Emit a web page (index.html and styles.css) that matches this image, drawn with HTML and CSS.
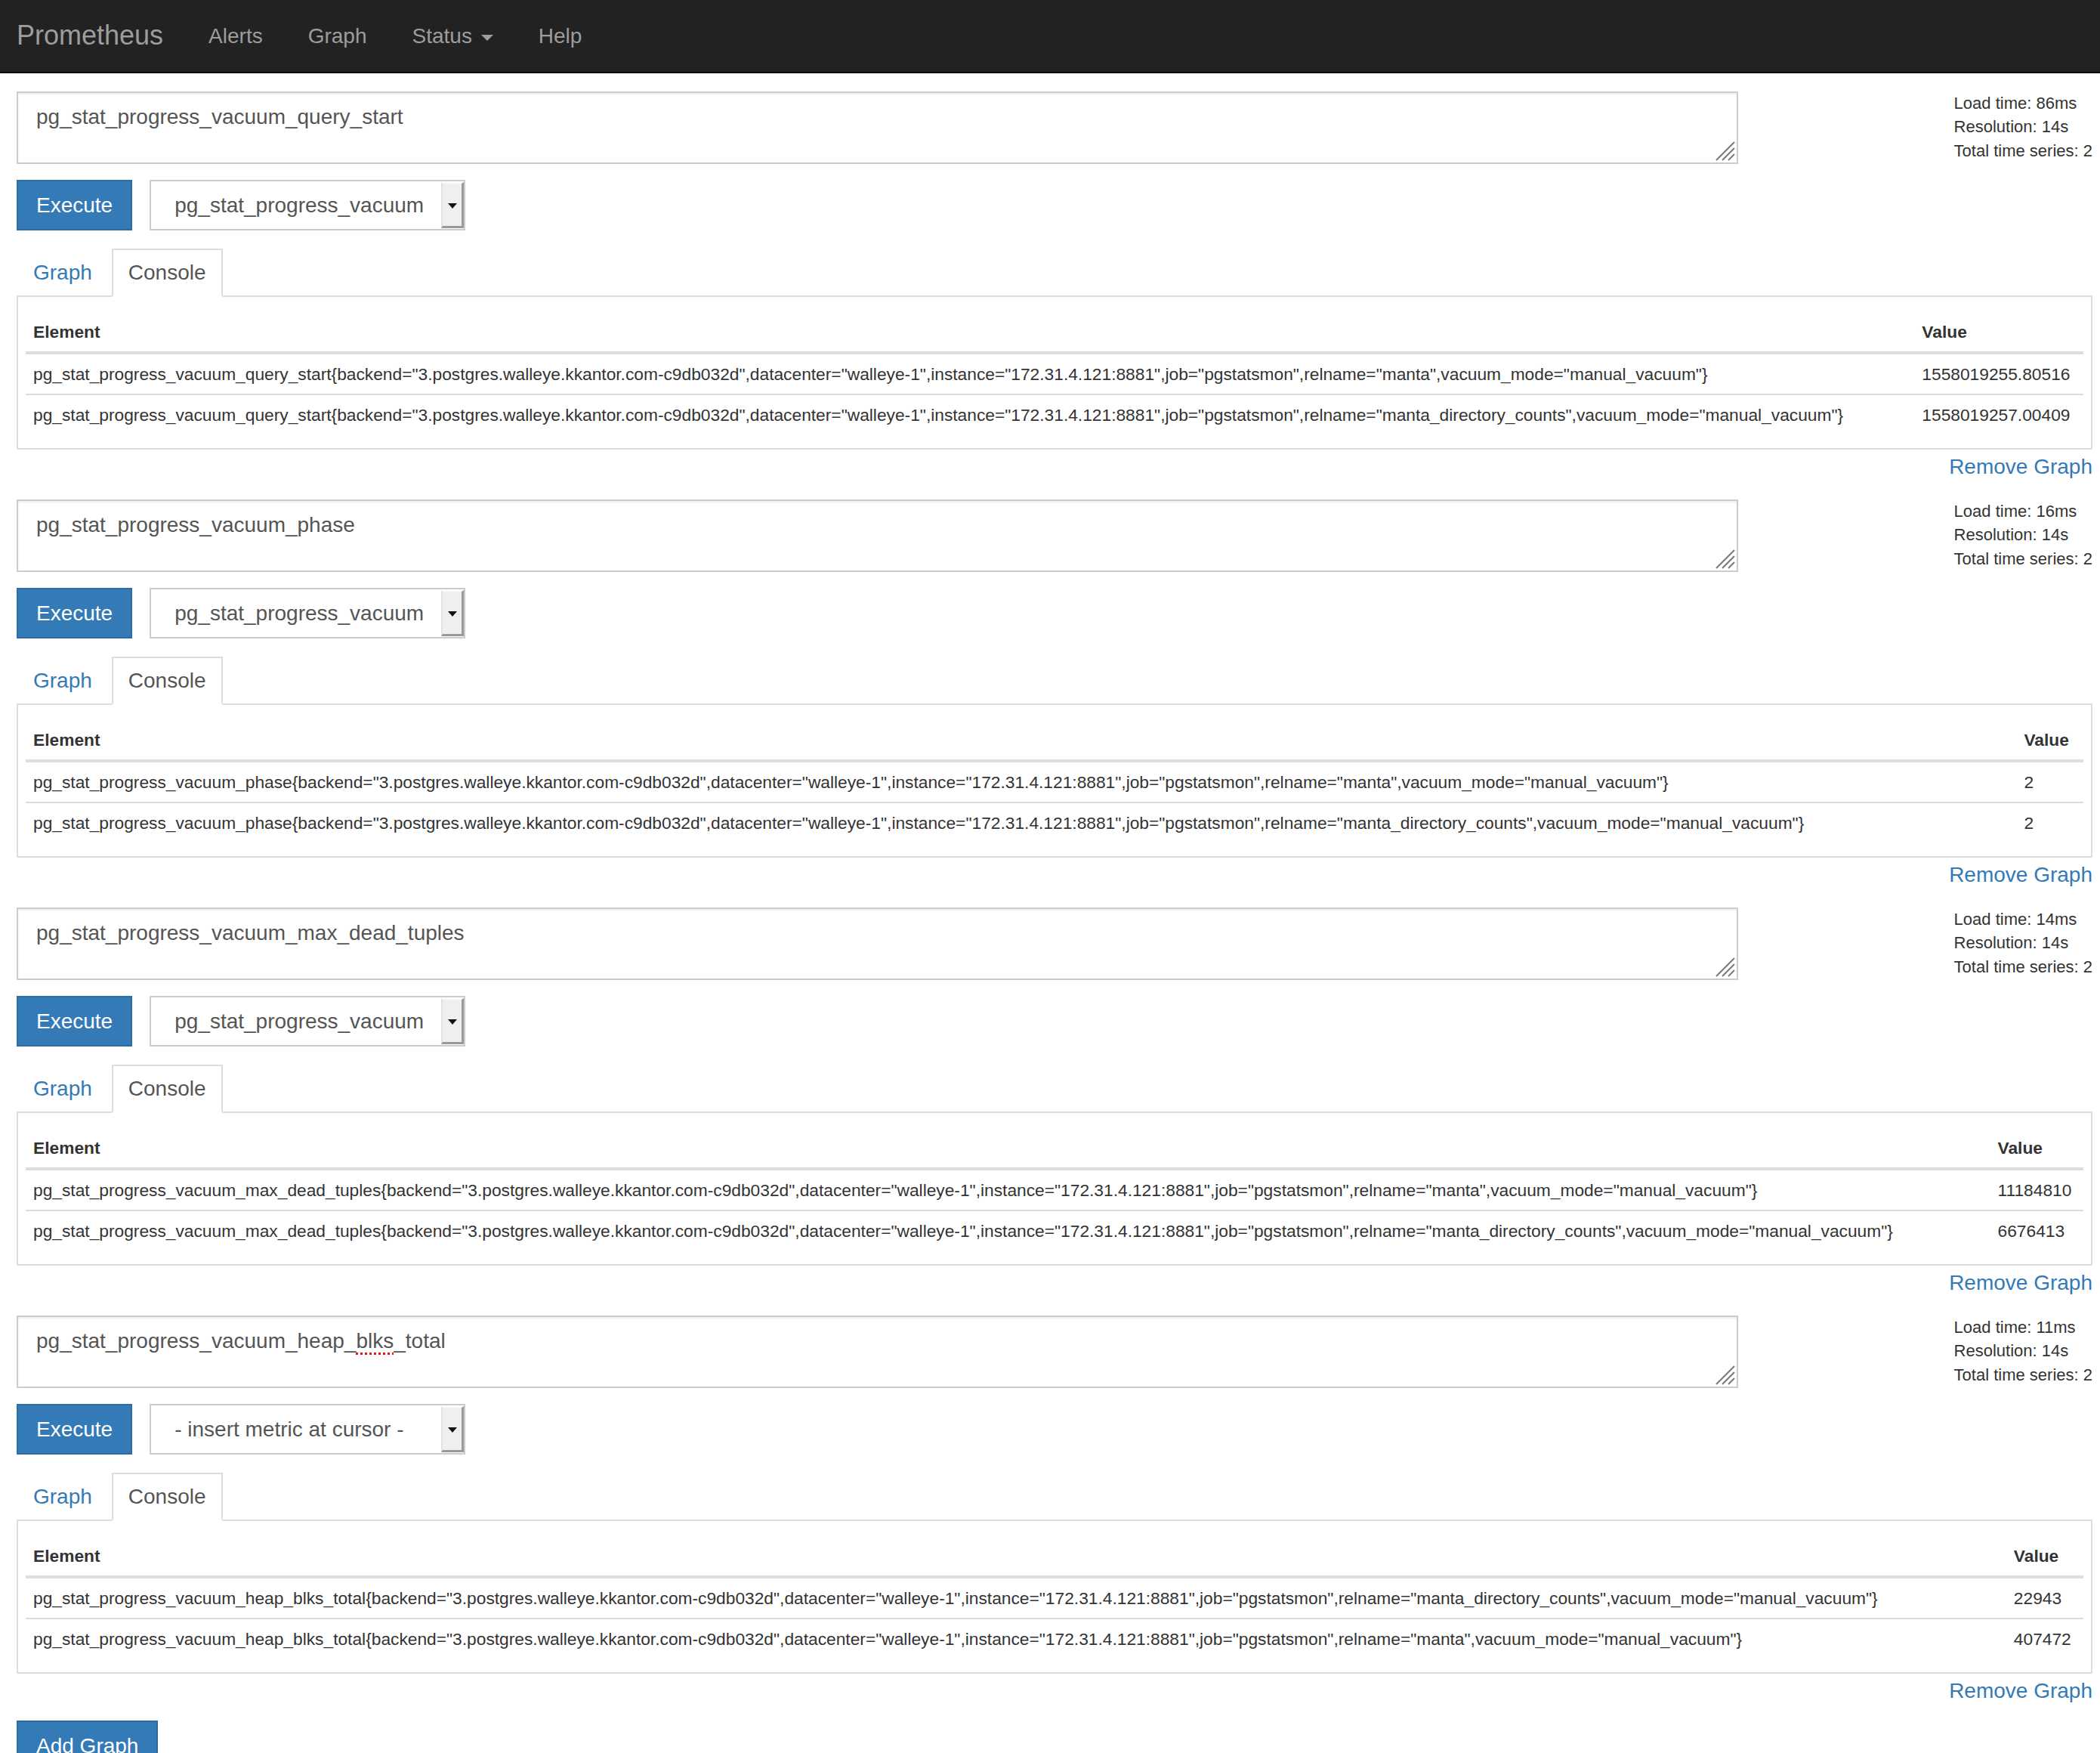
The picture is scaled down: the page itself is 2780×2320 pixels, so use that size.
FILE: index.html
```html
<!DOCTYPE html>
<html lang="en">
<head>
    <meta charset="UTF-8">
    <title>Prometheus Time Series Collection and Processing Server</title>
    <link rel="stylesheet" href="styles.css">
</head>
<body>
    <nav class="navbar">
        <span class="brand">Prometheus</span>
        <span class="nav-link">Alerts</span>
        <span class="nav-link">Graph</span>
        <span class="nav-link">Status <span class="caret"></span></span>
        <span class="nav-link">Help</span>
    </nav>

    <div class="container">
        <!-- graph 1 -->
        <div class="graph">
            <div class="expr-row">
                <div class="expr">pg_stat_progress_vacuum_query_start
                    <svg class="grip" viewBox="0 0 26 26"><path d="M1 25 L25 1 M9 25 L25 9 M17 25 L25 17"/></svg>
                </div>
                <div class="stats">Load time: 86ms<br>Resolution: 14s<br>Total time series: 2</div>
            </div>
            <div class="controls">
                <button class="btn">Execute</button>
                <div class="select"><span class="select-text">pg_stat_progress_vacuum_query_start</span><span class="select-arrow"><i></i></span></div>
            </div>
            <ul class="tabs">
                <li class="tab">Graph</li>
                <li class="tab active">Console</li>
            </ul>
            <div class="panel">
                <table>
                    <thead><tr><th>Element</th><th>Value</th></tr></thead>
                    <tbody>
                        <tr><td>pg_stat_progress_vacuum_query_start{backend="3.postgres.walleye.kkantor.com-c9db032d",datacenter="walleye-1",instance="172.31.4.121:8881",job="pgstatsmon",relname="manta",vacuum_mode="manual_vacuum"}</td><td>1558019255.80516</td></tr>
                        <tr><td>pg_stat_progress_vacuum_query_start{backend="3.postgres.walleye.kkantor.com-c9db032d",datacenter="walleye-1",instance="172.31.4.121:8881",job="pgstatsmon",relname="manta_directory_counts",vacuum_mode="manual_vacuum"}</td><td>1558019257.00409</td></tr>
                    </tbody>
                </table>
            </div>
            <div class="remove"><a>Remove Graph</a></div>
        </div>

        <!-- graph 2 -->
        <div class="graph">
            <div class="expr-row">
                <div class="expr">pg_stat_progress_vacuum_phase
                    <svg class="grip" viewBox="0 0 26 26"><path d="M1 25 L25 1 M9 25 L25 9 M17 25 L25 17"/></svg>
                </div>
                <div class="stats">Load time: 16ms<br>Resolution: 14s<br>Total time series: 2</div>
            </div>
            <div class="controls">
                <button class="btn">Execute</button>
                <div class="select"><span class="select-text">pg_stat_progress_vacuum_phase</span><span class="select-arrow"><i></i></span></div>
            </div>
            <ul class="tabs">
                <li class="tab">Graph</li>
                <li class="tab active">Console</li>
            </ul>
            <div class="panel">
                <table>
                    <thead><tr><th>Element</th><th>Value</th></tr></thead>
                    <tbody>
                        <tr><td>pg_stat_progress_vacuum_phase{backend="3.postgres.walleye.kkantor.com-c9db032d",datacenter="walleye-1",instance="172.31.4.121:8881",job="pgstatsmon",relname="manta",vacuum_mode="manual_vacuum"}</td><td>2</td></tr>
                        <tr><td>pg_stat_progress_vacuum_phase{backend="3.postgres.walleye.kkantor.com-c9db032d",datacenter="walleye-1",instance="172.31.4.121:8881",job="pgstatsmon",relname="manta_directory_counts",vacuum_mode="manual_vacuum"}</td><td>2</td></tr>
                    </tbody>
                </table>
            </div>
            <div class="remove"><a>Remove Graph</a></div>
        </div>

        <!-- graph 3 -->
        <div class="graph">
            <div class="expr-row">
                <div class="expr">pg_stat_progress_vacuum_max_dead_tuples
                    <svg class="grip" viewBox="0 0 26 26"><path d="M1 25 L25 1 M9 25 L25 9 M17 25 L25 17"/></svg>
                </div>
                <div class="stats">Load time: 14ms<br>Resolution: 14s<br>Total time series: 2</div>
            </div>
            <div class="controls">
                <button class="btn">Execute</button>
                <div class="select"><span class="select-text">pg_stat_progress_vacuum_max_dead_tuples</span><span class="select-arrow"><i></i></span></div>
            </div>
            <ul class="tabs">
                <li class="tab">Graph</li>
                <li class="tab active">Console</li>
            </ul>
            <div class="panel">
                <table>
                    <thead><tr><th>Element</th><th>Value</th></tr></thead>
                    <tbody>
                        <tr><td>pg_stat_progress_vacuum_max_dead_tuples{backend="3.postgres.walleye.kkantor.com-c9db032d",datacenter="walleye-1",instance="172.31.4.121:8881",job="pgstatsmon",relname="manta",vacuum_mode="manual_vacuum"}</td><td>11184810</td></tr>
                        <tr><td>pg_stat_progress_vacuum_max_dead_tuples{backend="3.postgres.walleye.kkantor.com-c9db032d",datacenter="walleye-1",instance="172.31.4.121:8881",job="pgstatsmon",relname="manta_directory_counts",vacuum_mode="manual_vacuum"}</td><td>6676413</td></tr>
                    </tbody>
                </table>
            </div>
            <div class="remove"><a>Remove Graph</a></div>
        </div>

        <!-- graph 4 -->
        <div class="graph">
            <div class="expr-row">
                <div class="expr">pg_stat_progress_vacuum_heap_<span class="typo">blks</span>_total
                    <svg class="grip" viewBox="0 0 26 26"><path d="M1 25 L25 1 M9 25 L25 9 M17 25 L25 17"/></svg>
                </div>
                <div class="stats">Load time: 11ms<br>Resolution: 14s<br>Total time series: 2</div>
            </div>
            <div class="controls">
                <button class="btn">Execute</button>
                <div class="select"><span class="select-text">- insert metric at cursor -</span><span class="select-arrow"><i></i></span></div>
            </div>
            <ul class="tabs">
                <li class="tab">Graph</li>
                <li class="tab active">Console</li>
            </ul>
            <div class="panel">
                <table>
                    <thead><tr><th>Element</th><th>Value</th></tr></thead>
                    <tbody>
                        <tr><td>pg_stat_progress_vacuum_heap_blks_total{backend="3.postgres.walleye.kkantor.com-c9db032d",datacenter="walleye-1",instance="172.31.4.121:8881",job="pgstatsmon",relname="manta_directory_counts",vacuum_mode="manual_vacuum"}</td><td>22943</td></tr>
                        <tr><td>pg_stat_progress_vacuum_heap_blks_total{backend="3.postgres.walleye.kkantor.com-c9db032d",datacenter="walleye-1",instance="172.31.4.121:8881",job="pgstatsmon",relname="manta",vacuum_mode="manual_vacuum"}</td><td>407472</td></tr>
                    </tbody>
                </table>
            </div>
            <div class="remove"><a>Remove Graph</a></div>
        </div>

        <button class="btn">Add Graph</button>
    </div>
</body>
</html>
```

FILE: styles.css
```css
* {
    box-sizing: border-box;
}
html, body {
    margin: 0;
    padding: 0;
}
body {
    font-family: "Liberation Sans", Arial, Helvetica, sans-serif;
    font-size: 28px;
    line-height: 40px;
    color: #333;
    background-color: #fff;
}

/* top bar */
.navbar {
    display: flex;
    align-items: flex-start;
    height: 97px;
    padding-left: 22px;
    background-color: #222;
    border-bottom: 2px solid #080808;
}
.brand {
    font-size: 36px;
    line-height: 40px;
    padding: 27px 30px 0 0;
    color: #9d9d9d;
}
.nav-link {
    padding: 28px 30px 0;
    color: #9d9d9d;
}
.caret {
    display: inline-block;
    width: 0;
    height: 0;
    margin-left: 4px;
    vertical-align: middle;
    border-top: 8px solid #9d9d9d;
    border-left: 8px solid transparent;
    border-right: 8px solid transparent;
}

.container {
    padding: 20px 10px 0 22px;
}
.graph {
    padding-top: 4px;
    margin-bottom: 19px;
}

/* expression input + stats */
.expr-row {
    display: flex;
    justify-content: space-between;
    align-items: flex-start;
}
.expr {
    position: relative;
    width: 2279px;
    height: 96px;
    padding: 12px 24px;
    color: #555;
    border: 2px solid #ccc;
    box-shadow: inset 0 2px 2px rgba(0, 0, 0, .075);
}
.typo {
    text-decoration: underline dotted #e8141a;
    text-decoration-thickness: 3px;
    text-underline-offset: 6px;
}
.grip {
    position: absolute;
    right: 2px;
    bottom: 2px;
    width: 26px;
    height: 26px;
    stroke: #7a7a7a;
    stroke-width: 2;
}
.stats {
    font-size: 22px;
    line-height: 31.4px;
    color: #333;
}

/* execute + metric select */
.controls {
    display: flex;
    height: 67px;
    margin-top: 21px;
}
.btn {
    font-family: inherit;
    font-size: 28px;
    line-height: 63px;
    padding: 0 24px;
    color: #fff;
    background-color: #337ab7;
    border: 2px solid #2e6da4;
    border-radius: 0;
}
.select {
    display: flex;
    align-items: center;
    width: 418px;
    margin-left: 23px;
    padding-left: 31px;
    color: #555;
    border: 2px solid #ccc;
}
.select-text {
    width: 329px;
    overflow: hidden;
    white-space: nowrap;
}
.select-arrow {
    display: flex;
    align-items: center;
    justify-content: center;
    width: 30px;
    height: 61px;
    margin-left: auto;
    background-color: #efefef;
    border-top: 2px solid #fafafa;
    border-left: 2px solid #e2e2e2;
    border-right: 3px solid #9a9a9a;
    border-bottom: 3px solid #9a9a9a;
}
.select-arrow i {
    width: 0;
    height: 0;
    margin-top: 2px;
    border-top: 7px solid #111;
    border-left: 6px solid transparent;
    border-right: 6px solid transparent;
}

/* tabs */
.tabs {
    display: flex;
    margin: 24px 0 0;
    padding: 0;
    list-style: none;
}
.tab {
    padding: 10px 20px;
    margin: 0 4px -2px 0;
    color: #337ab7;
    border: 2px solid transparent;
}
.tab.active {
    position: relative;
    color: #555;
    background-color: #fff;
    border-color: #ddd;
    border-bottom-color: #fff;
}

/* console table */
.panel {
    padding: 20px 10px 18px;
    border: 2px solid #ddd;
}
table {
    width: 100%;
    border-spacing: 0;
    font-size: 22.75px;
    line-height: 32px;
}
th {
    text-align: left;
    padding: 10px;
    border-bottom: 4px solid #ddd;
}
td {
    padding: 10px;
}
tr + tr td {
    border-top: 2px solid #ddd;
}

.remove {
    padding-top: 3px;
    text-align: right;
}
.remove a {
    color: #337ab7;
}
```
